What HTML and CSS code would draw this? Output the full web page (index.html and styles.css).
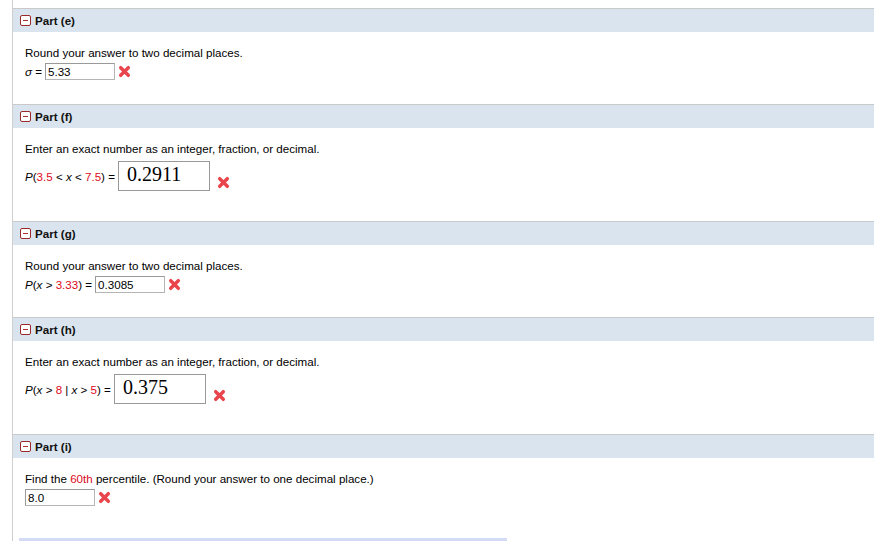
FILE: index.html
```html
<!DOCTYPE html>
<html lang="en">
<head>
    <meta charset="UTF-8">
    <title>Homework - Parts</title>
    <link rel="stylesheet" href="styles.css">
</head>
<body>
    <div class="page">

        <div class="part">
            <div class="part-head"><span class="toggle"></span>Part (e)</div>
            <div class="part-body">
                <p class="prompt">Round your answer to two decimal places.</p>
                <div class="answer">
                    <span class="label"><i>σ</i> =</span>
                    <input class="box" type="text" value="5.33" readonly>
                    <svg class="wrong" viewBox="0 0 12 12"><path d="M2.5 2.5 L9.5 9.5 M9.5 2.5 L2.5 9.5"/></svg>
                </div>
            </div>
        </div>

        <div class="part">
            <div class="part-head"><span class="toggle"></span>Part (f)</div>
            <div class="part-body">
                <p class="prompt">Enter an exact number as an integer, fraction, or decimal.</p>
                <div class="answer big">
                    <span class="label"><i>P</i>(<span class="num">3.5</span> &lt; <i>x</i> &lt; <span class="num">7.5</span>) =</span>
                    <input class="box" type="text" value="0.2911" readonly>
                    <svg class="wrong" viewBox="0 0 12 12"><path d="M2.5 2.5 L9.5 9.5 M9.5 2.5 L2.5 9.5"/></svg>
                </div>
            </div>
        </div>

        <div class="part">
            <div class="part-head"><span class="toggle"></span>Part (g)</div>
            <div class="part-body">
                <p class="prompt">Round your answer to two decimal places.</p>
                <div class="answer">
                    <span class="label"><i>P</i>(<i>x</i> &gt; <span class="num">3.33</span>) =</span>
                    <input class="box" type="text" value="0.3085" readonly>
                    <svg class="wrong" viewBox="0 0 12 12"><path d="M2.5 2.5 L9.5 9.5 M9.5 2.5 L2.5 9.5"/></svg>
                </div>
            </div>
        </div>

        <div class="part">
            <div class="part-head"><span class="toggle"></span>Part (h)</div>
            <div class="part-body">
                <p class="prompt">Enter an exact number as an integer, fraction, or decimal.</p>
                <div class="answer big">
                    <span class="label"><i>P</i>(<i>x</i> &gt; <span class="num">8</span> | <i>x</i> &gt; <span class="num">5</span>) =</span>
                    <input class="box" type="text" value="0.375" readonly>
                    <svg class="wrong" viewBox="0 0 12 12"><path d="M2.5 2.5 L9.5 9.5 M9.5 2.5 L2.5 9.5"/></svg>
                </div>
            </div>
        </div>

        <div class="part">
            <div class="part-head"><span class="toggle"></span>Part (i)</div>
            <div class="part-body">
                <p class="prompt">Find the <span class="num">60th</span> percentile. (Round your answer to one decimal place.)</p>
                <div class="answer">
                    <input class="box" type="text" value="8.0" readonly>
                    <svg class="wrong" viewBox="0 0 12 12"><path d="M2.5 2.5 L9.5 9.5 M9.5 2.5 L2.5 9.5"/></svg>
                </div>
            </div>
        </div>

        <div class="footer-bar"></div>
    </div>
</body>
</html>
```

FILE: styles.css
```css
body {
    margin: 0;
    background: #fff;
    font-family: "Liberation Sans", Arial, sans-serif;
    font-size: 11.6px;
    color: #000;
}

.page {
    margin-left: 12px;
    padding-top: 8px;
    min-height: 600px;
    border-left: 1px solid #cfcfcf;
}

.part-head {
    display: flex;
    align-items: center;
    height: 23px;
    padding-left: 7px;
    border-top: 1px solid #c9c9c9;
    background: #dae4ee;
    font-weight: bold;
    color: #111;
}

.toggle {
    position: relative;
    box-sizing: border-box;
    width: 11px;
    height: 11px;
    margin-right: 4px;
    border: 1px solid #9b2a2a;
    border-radius: 2px;
    background: #fff;
}

.toggle::after {
    content: "";
    position: absolute;
    left: 2px;
    top: 4px;
    width: 5px;
    height: 1px;
    background: #b03030;
}

.part-body {
    padding: 14px 0 24px 12px;
}

.prompt {
    margin: 0;
    line-height: 13px;
}

.answer {
    display: flex;
    align-items: center;
    margin-top: 4px;
}

.answer.big {
    margin-top: 6px;
    margin-bottom: 6px;
}

.label {
    margin-right: 3px;
    white-space: pre;
}

.num {
    color: #dd0a22;
}

.box {
    box-sizing: border-box;
    width: 70px;
    height: 17px;
    margin: 0;
    padding: 0 2px;
    border: 1px solid #b5b5b5;
    border-top-color: #9a9a9a;
    border-left-color: #9a9a9a;
    font-family: "Liberation Sans", Arial, sans-serif;
    font-size: 11.6px;
    color: #000;
    outline: none;
}

.big .box {
    width: 92px;
    height: 30px;
    padding: 0 8px 3px;
    border: 1px solid #999;
    font-family: "Liberation Serif", "Times New Roman", serif;
    font-size: 20px;
}

.wrong {
    width: 13px;
    height: 13px;
    margin-left: 3px;
}

.wrong path {
    fill: none;
    stroke: #e8464c;
    stroke-width: 3.2;
    stroke-linecap: round;
}

.big .wrong {
    margin-left: 7px;
    margin-top: 12px;
}

.footer-bar {
    height: 4px;
    width: 488px;
    margin: 8px 0 0 6px;
    background: #d3dbf6;
}
```
